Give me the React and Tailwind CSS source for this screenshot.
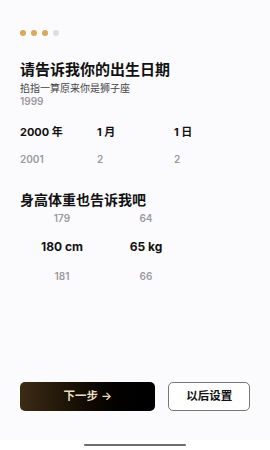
export default function App() {
  const cjk = { fontFamily: 'Inter, "Noto Sans CJK SC", sans-serif' };

  return (
    <div className="w-[270px] h-[450px] bg-[#fbfafd] flex flex-col overflow-hidden" style={cjk}>
      <div className="px-5 pt-[30px] flex-1 flex flex-col">
        <div className="flex gap-[5px]">
          <span className="w-[6px] h-[6px] rounded-full bg-[#d9a85a]" />
          <span className="w-[6px] h-[6px] rounded-full bg-[#d9a85a]" />
          <span className="w-[6px] h-[6px] rounded-full bg-[#d9a85a]" />
          <span className="w-[6px] h-[6px] rounded-full bg-[#dedde2]" />
        </div>

        <div className="mt-[24px] text-[15px] leading-[20px] font-bold text-[#111]">请告诉我你的出生日期</div>
        <div className="mt-[2px] text-[10px] leading-[13px] text-[#444]">掐指一算原来你是狮子座</div>
        <div className="text-[10px] leading-[13px] font-semibold text-[#9a9a9e]">1999</div>

        <div className="mt-[17px] grid grid-cols-[77px_77px_77px] text-[11px] leading-[14px] font-bold text-[#111]">
          <span>2000 年</span>
          <span>1 月</span>
          <span>1 日</span>
        </div>
        <div className="mt-[14px] grid grid-cols-[77px_77px_77px] text-[10px] leading-[13px] font-semibold text-[#9a9a9e]">
          <span>2001</span>
          <span>2</span>
          <span>2</span>
        </div>

        <div className="mt-[25px] text-[14px] leading-[18px] font-bold text-[#111]">身高体重也告诉我吧</div>
        <div className="grid grid-cols-[84px_84px] text-center">
          <span className="mt-[3px] text-[10px] leading-[13px] font-semibold text-[#9a9a9e]">179</span>
          <span className="mt-[3px] text-[10px] leading-[13px] font-semibold text-[#9a9a9e]">64</span>
          <span className="mt-[14px] text-[12px] leading-[15px] font-bold text-[#111]">180 cm</span>
          <span className="mt-[14px] text-[12px] leading-[15px] font-bold text-[#111]">65 kg</span>
          <span className="mt-[16px] text-[10px] leading-[13px] font-semibold text-[#9a9a9e]">181</span>
          <span className="mt-[16px] text-[10px] leading-[13px] font-semibold text-[#9a9a9e]">66</span>
        </div>

        <div className="mt-auto mb-[29px] flex gap-[13px]">
          <button className="w-[136px] h-[29px] rounded-[5px] bg-gradient-to-r from-[#3d2c15] to-[#000] text-[#eadcc0] text-[11.5px] font-semibold">
            下一步 →
          </button>
          <button className="w-[82px] h-[29px] rounded-[5px] border border-[#777] bg-white text-[#111] text-[11.5px] font-semibold">
            以后设置
          </button>
        </div>
      </div>
      <div className="h-[10px] bg-white flex justify-center pt-[4px]">
        <div className="w-[102px] h-[2px] rounded-full bg-[#6d6d6d]" />
      </div>
    </div>
  );
}
